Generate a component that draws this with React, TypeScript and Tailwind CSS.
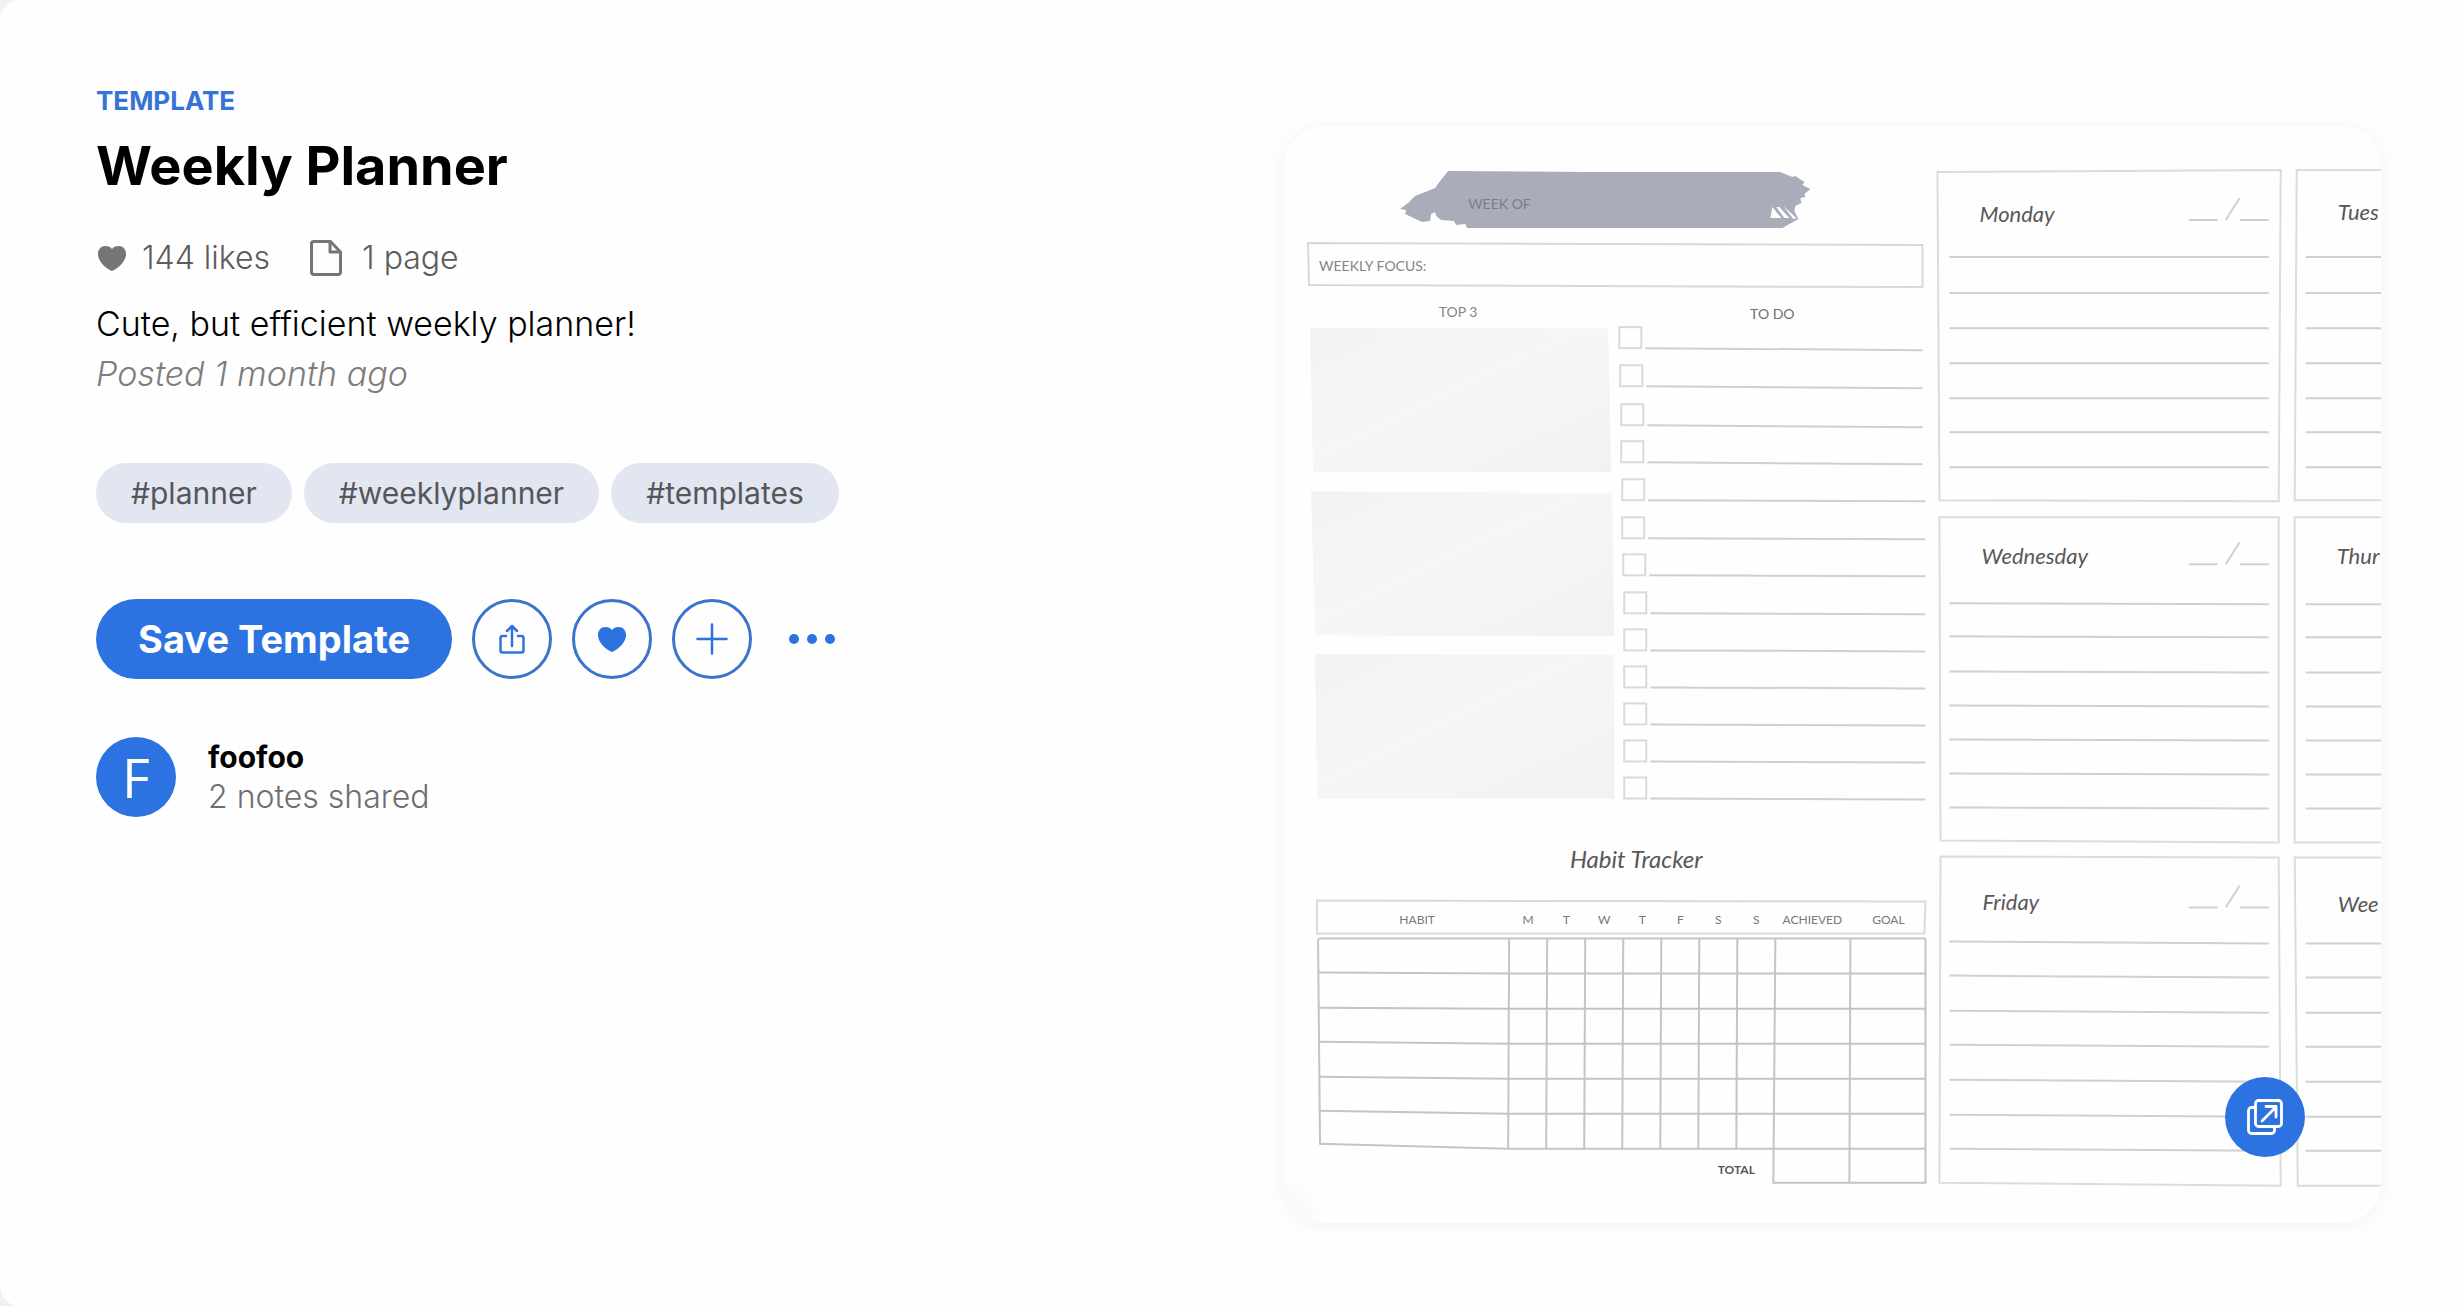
import type { ReactNode } from "react";

const tags = ["#planner", "#weeklyplanner", "#templates"];

// to-do rows: checkbox left edge and top
const todos = [
  [335, 201], [336, 239], [337, 278], [337, 315], [338, 353], [338, 391], [339, 428],
  [340, 466], [340, 503], [340, 540], [340, 577], [340, 614], [340, 651],
];

const topThree = [
  "M26 202 L324 202 L327 346 L29 346 Z",
  "M27 365 L328 367 L330 510 L31 509 Z",
  "M31 528 L330 528 L330 672 L33 672 Z",
];

const habitHeads = [
  { label: "HABIT", x: 133 },
  { label: "M", x: 244 },
  { label: "T", x: 282 },
  { label: "W", x: 320 },
  { label: "T", x: 358 },
  { label: "F", x: 396 },
  { label: "S", x: 434 },
  { label: "S", x: 472 },
  { label: "ACHIEVED", x: 528 },
  { label: "GOAL", x: 604 },
];

// left and right height of each habit row line
const habitRows = [
  [812, 812], [846, 847], [881, 882], [915, 917], [950, 952], [984, 987], [1017, 1022],
];

const habitCols = [225, 263, 301, 339, 377, 415, 453];

const days = [
  {
    name: "Monday", x: 695, y: 96, date: 94,
    frame: "M653 46 L996 44 L994 375 L655 374 Z",
    lines: [131, 167, 202, 237, 272, 306, 341], slope: 0,
    next: "Tues", nextX: 1053, nextY: 94,
    nextFrame: "M1120 44 H1012 L1010 374 H1120",
  },
  {
    name: "Wednesday", x: 697, y: 438, date: 438,
    frame: "M655 391 L994 391 L994 716 L656 714 Z",
    lines: [477, 510, 545, 579, 613, 647, 681], slope: 1,
    next: "Thur", nextX: 1052, nextY: 438,
    nextFrame: "M1120 391 H1010 V716 H1120",
  },
  {
    name: "Friday", x: 698, y: 783, date: 781,
    frame: "M656 730 L994 731 L996 1059 L655 1056 Z",
    lines: [815, 849, 884, 918, 953, 988, 1022], slope: 2,
    next: "Wee", nextX: 1053, nextY: 785,
    nextFrame: "M1120 731 H1010 L1013 1059 H1120",
  },
];

function Heart({ className }: { className: string }) {
  return (
    <svg viewBox="0 0 28 25" className={className} fill="currentColor" aria-hidden="true">
      <path d="M14 25C12 24.500 0 17.500 0 8C0 3.500 3 0 7.300 0C10.200 0 12.700 1 14 3C15.300 1 17.800 0 20.700 0C25 0 28 3.500 28 8C28 17.500 16 24.500 14 25Z" />
    </svg>
  );
}

function RoundButton({ label, children }: { label: string; children: ReactNode }) {
  return (
    <button
      aria-label={label}
      className="flex size-20 items-center justify-center rounded-full border-3 border-[#3a74cd] text-[#2c73e1]"
    >
      {children}
    </button>
  );
}

function PlannerPreview() {
  return (
    <svg viewBox="0 0 1096 1096" className="block w-full" fill="none" role="img" aria-label="Weekly planner page">
      <defs>
        <linearGradient id="wash" x1="0" y1="0" x2="1" y2="1">
          <stop offset="0" stopColor="#f0f2f4" />
          <stop offset="0.45" stopColor="#f5f7f7" />
          <stop offset="1" stopColor="#eff1f3" />
        </linearGradient>
        <radialGradient id="smudge" cx="0" cy="1" r="1">
          <stop offset="0" stopColor="#f6f3f0" />
          <stop offset="1" stopColor="#fefefe" />
        </radialGradient>
      </defs>
      <rect width="1096" height="1096" fill="#fefefe" />
      <rect y="1046" width="40" height="50" fill="url(#smudge)" />

      {/* brush stroke */}
      <path
        d="M164 45 L305 46 L496 46 L508 51 L511 50 L520 56 L518 59 L526 63 L520 68 L521 71 L516 72 L517 77 L511 80 L510 85 L514 93 L507 97 L498 102 L183 102 L181 98 L172 99 L170 95 L157 94 L152 90 L151 86 L147 88 L146 95 L138 96 L121 88 L122 84 L116 83 L124 77 L131 70 L151 62 L156 55 Z"
        fill="#a9adb9"
      />
      <path d="M486 92 L488 81 L497 92 Z M492 81 L495 81 L505 92 L500 92 Z M499 80 L512 92 L509 93 Z" fill="#fefefe" />

      <g fontFamily="Lato, sans-serif" fontSize="14" fill="#858585">
        <text x="184" y="83" fill="#7b7e89">WEEK OF</text>
        <text x="35" y="145">WEEKLY FOCUS:</text>
        <text x="174" y="191" textAnchor="middle">TOP 3</text>
        <text x="488" y="193" textAnchor="middle" fill="#6f6f6f">TO DO</text>
      </g>
      <path d="M24 117 L638 119 V161 L25 159 Z" stroke="#d8d8d8" strokeWidth="2" />

      {topThree.map((d) => (
        <path key={d} d={d} fill="url(#wash)" />
      ))}

      {todos.map(([x, y], i) => (
        <g key={y} strokeWidth="2">
          <rect x={x} y={y} width="22" height="21" stroke="#dcd9d8" />
          <path d={`M${x + 26} ${y + 21} L${i < 4 ? 638 : 641} ${y + (i < 4 ? 23 : 22)}`} stroke="#cfcfcf" />
        </g>
      ))}

      <text x="352" y="741" textAnchor="middle" fontFamily="Lato, sans-serif" fontSize="24" fontStyle="italic" fill="#5a5757">
        Habit Tracker
      </text>
      <path d="M33 774 L641 775 L640 807 H33 Z" stroke="#dadada" strokeWidth="2" />
      <g fontFamily="Lato, sans-serif" fontSize="12" fill="#777" textAnchor="middle">
        {habitHeads.map((h) => (
          <text key={h.x} x={h.x} y="797">{h.label}</text>
        ))}
        <text x="452" y="1047" fontWeight="700" fill="#555">TOTAL</text>
      </g>
      <g stroke="#c6c3c1" strokeWidth="2">
        {habitRows.map(([left, right]) => (
          <path key={left} d={`M35 ${left} L224 ${right} H641`} />
        ))}
        <path d="M34 812 L36 1017" />
        {habitCols.map((x) => (
          <path key={x} d={`M${x} 812 L${x - 1} 1022`} />
        ))}
        <path d="M491 812 L489 1056 H641 V812 M566 812 L565 1056" />
      </g>

      {days.map((day) => (
        <g key={day.name}>
          <g stroke="#dcdcdc" strokeWidth="2">
            <path d={day.frame} />
            <path d={day.nextFrame} />
          </g>
          <g stroke="#d0d0d0" strokeWidth="2">
            {day.lines.map((y) => (
              <path key={y} d={`M665 ${y} L984 ${y + day.slope} M1021 ${y + day.slope} H1100`} />
            ))}
            <path d={`M904 ${day.date} h29 M955 ${day.date} h29 M941 ${day.date} l14 -22`} />
          </g>
          <g fontFamily="Lato, sans-serif" fontSize="22" fontStyle="italic" fill="#5a5757">
            <text x={day.x} y={day.y}>{day.name}</text>
            <text x={day.nextX} y={day.nextY}>{day.next}</text>
          </g>
        </g>
      ))}
    </svg>
  );
}

export default function App() {
  return (
    <div className="min-h-screen bg-[#f1f1f1] font-[Inter,sans-serif]">
      <main className="flex min-h-screen items-start justify-between rounded-l-[20px] bg-[#fefefe] pr-[83px] pl-24">
        <section className="pt-20">
          <p className="text-[26px] leading-[42px] font-bold text-[#3574d6]">TEMPLATE</p>
          <h1 className="mt-1.5 text-[54px] leading-[76px] font-bold text-black">Weekly Planner</h1>
          <div className="mt-[29px] flex h-[50px] items-center text-[32px] font-light text-[#5c5c5c]">
            <Heart className="mr-4 ml-0.5 h-[25px] w-7 text-[#757575]" />
            <span>144 likes</span>
            <svg viewBox="0 0 32 36" className="mr-5 ml-10 h-9 w-8 text-[#757575]" fill="none" stroke="currentColor" strokeWidth="3" strokeLinejoin="round" aria-hidden="true">
              <path d="M4 1.500H20.500L30.500 12V32Q30.500 34.500 28 34.500H4Q1.500 34.500 1.500 32V4Q1.500 1.500 4 1.500Z" />
              <path d="M20 2V12H30" />
            </svg>
            <span>1 page</span>
          </div>
          <p className="mt-4 text-[34px] leading-[50px] font-light text-black">Cute, but efficient weekly planner!</p>
          <p className="text-[34px] leading-[50px] font-light text-[#7d7d7d] italic">Posted 1 month ago</p>

          <div className="mt-16 flex gap-3">
            {tags.map((tag) => (
              <a key={tag} href="#" className="flex h-[60px] items-center rounded-full bg-[#e2e6f1] px-[35px] text-[30px] text-[#54565b]">
                {tag}
              </a>
            ))}
          </div>

          <div className="mt-[76px] flex items-center gap-5">
            <button className="h-20 rounded-full bg-[#2c73e1] px-[42px] text-[38px] font-bold text-white">Save Template</button>
            <RoundButton label="Share">
              <svg viewBox="0 0 26 30" className="h-[30px] w-[26px]" fill="none" stroke="currentColor" strokeWidth="2.500" strokeLinecap="round" strokeLinejoin="round" aria-hidden="true">
                <path d="M7 12H3.500Q1.500 12 1.500 14V26.500Q1.500 28.500 3.500 28.500H22.500Q24.500 28.500 24.500 26.500V14Q24.500 12 22.500 12H19" />
                <path d="M13 22V2M8 7L13 2L18 7" />
              </svg>
            </RoundButton>
            <RoundButton label="Like">
              <Heart className="h-[25px] w-7" />
            </RoundButton>
            <RoundButton label="Add">
              <svg viewBox="0 0 32 32" className="size-8" stroke="currentColor" strokeWidth="2.500" strokeLinecap="round" aria-hidden="true">
                <path d="M16 1.500V30.500M1.500 16H30.500" />
              </svg>
            </RoundButton>
            <button aria-label="More" className="flex size-20 items-center justify-center text-[#2c73e1]">
              <svg viewBox="0 0 46 10" className="h-2.5 w-[46px]" fill="currentColor" aria-hidden="true">
                <circle cx="5" cy="5" r="5" />
                <circle cx="23" cy="5" r="5" />
                <circle cx="41" cy="5" r="5" />
              </svg>
            </button>
          </div>

          <div className="mt-[58px] flex items-center gap-8">
            <div className="flex size-20 items-center justify-center rounded-full bg-[#2c73e1] font-['Open_Sans',sans-serif] text-[54px] leading-none text-white">
              F
            </div>
            <div>
              <p className="text-[30px] leading-10 font-bold text-black">foofoo</p>
              <p className="text-[32px] leading-10 font-light text-[#6f6f6f]">2 notes shared</p>
            </div>
          </div>
        </section>

        <section className="relative mt-[126px] w-[48%] shrink-0 overflow-hidden rounded-[40px] shadow-[0_2px_20px_rgba(0,0,0,0.05)]">
          <PlannerPreview />
          <button
            aria-label="Open preview"
            className="absolute right-[76px] bottom-[66px] flex size-20 items-center justify-center rounded-full bg-[#2c73e1] text-white"
          >
            <svg viewBox="0 0 36 36" className="size-9" fill="none" stroke="currentColor" strokeWidth="2.800" strokeLinecap="round" strokeLinejoin="round" aria-hidden="true">
              <rect x="8.500" y="1.500" width="26" height="26" rx="3" />
              <path d="M8 8.500H4.500a3 3 0 0 0-3 3v20a3 3 0 0 0 3 3h20a3 3 0 0 0 3-3V28M15 22L29 8M19 7.500H29V18" />
            </svg>
          </button>
        </section>
      </main>
    </div>
  );
}
